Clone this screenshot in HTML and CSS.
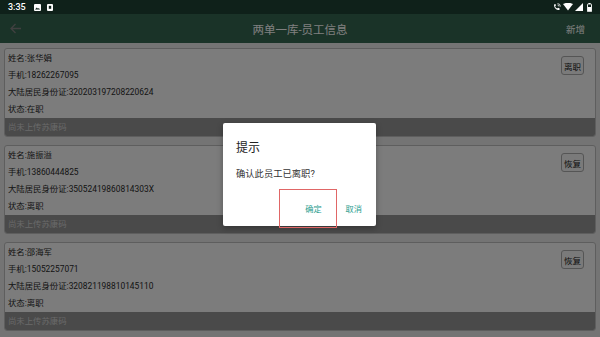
FILE: index.html
```html
<!DOCTYPE html>
<html lang="zh-CN">
<head>
    <meta charset="UTF-8">
    <meta name="viewport" content="width=device-width, initial-scale=1.0">
    <title>两单一库-员工信息</title>
    <link rel="stylesheet" href="styles.css">
</head>
<body>

    <!-- barra de status -->
    <div class="statusbar">
        <div class="status-left">
            <span class="time">3:35</span>
            <svg class="sicon" width="7" height="7" viewBox="0 0 7 7"><rect x="0" y="0" width="7" height="7" rx="1" fill="#fff"/><path d="M1 5.5 L2.8 3.5 L4 4.7 L4.8 4 L6 5.5 Z" fill="#0f211a"/></svg>
            <svg class="sicon" width="6" height="7" viewBox="0 0 6 7"><rect x="0" y="0" width="6" height="7" rx="1" fill="#fff"/><rect x="1.8" y="1.8" width="2.4" height="3" fill="#0f211a"/></svg>
        </div>
        <div class="status-right">
            <svg width="8" height="8" viewBox="0 0 8 8"><path d="M1 1.5 C1 5 3 7 6.5 7 L6.5 5.3 L5 4.8 L4.2 5.6 C3.2 5 2.6 4.4 2.1 3.4 L2.9 2.6 L2.5 1 Z" fill="#fff"/><path d="M4.5 0.6 A3 3 0 0 1 7.4 3.5 M4.5 2 A1.5 1.5 0 0 1 6 3.5" stroke="#fff" stroke-width="0.8" fill="none"/></svg>
            <svg width="10" height="8" viewBox="0 0 10 8"><path d="M0 1 Q5 -1.5 10 1 L5 7.5 Z" fill="#fff"/></svg>
            <svg width="8" height="8" viewBox="0 0 8 8"><path d="M0 8 L8 0 L8 8 Z" fill="#fff"/></svg>
            <svg width="5" height="9" viewBox="0 0 5 9"><rect x="1.5" y="0" width="2" height="1" fill="#fff"/><rect x="0.5" y="1" width="4" height="8" rx="0.6" fill="none" stroke="#fff" stroke-width="0.9"/><rect x="1" y="4" width="3" height="4.6" fill="#fff"/></svg>
        </div>
    </div>

    <!-- barra do titulo -->
    <div class="toolbar">
        <svg class="back" width="12" height="11" viewBox="0 0 12 11"><path d="M11 5.5 H1.5 M5.5 1 L1 5.5 L5.5 10" stroke="#808080" stroke-width="1.3" fill="none"/></svg>
        <div class="title">两单一库-员工信息</div>
        <div class="action">新增</div>
    </div>

    <div class="lista">
        <div class="card">
            <div class="card-top">
                <div class="info">
                    <p>姓名:张华娟</p>
                    <p>手机:18262267095</p>
                    <p>大陆居民身份证:320203197208220624</p>
                    <p>状态:在职</p>
                </div>
                <button class="btn">离职</button>
            </div>
            <div class="bar">尚未上传苏康码</div>
        </div>

        <div class="card">
            <div class="card-top">
                <div class="info">
                    <p>姓名:施振溢</p>
                    <p>手机:13860444825</p>
                    <p>大陆居民身份证:35052419860814303X</p>
                    <p>状态:离职</p>
                </div>
                <button class="btn">恢复</button>
            </div>
            <div class="bar">尚未上传苏康码</div>
        </div>

        <div class="card">
            <div class="card-top">
                <div class="info">
                    <p>姓名:邵海军</p>
                    <p>手机:15052257071</p>
                    <p>大陆居民身份证:320821198810145110</p>
                    <p>状态:离职</p>
                </div>
                <button class="btn">恢复</button>
            </div>
            <div class="bar">尚未上传苏康码</div>
        </div>
    </div>

    <!-- dialogo de confirmacao -->
    <div class="dim"></div>
    <div class="dialog">
        <div class="dlg-title">提示</div>
        <div class="dlg-msg">确认此员工已离职?</div>
        <div class="dlg-btns">
            <span class="dlg-btn">确定</span>
            <span class="dlg-btn">取消</span>
        </div>
        <div class="marca"></div>
    </div>

</body>
</html>
```

FILE: styles.css
```css
body {
    margin: 0;
    width: 600px;
    height: 337px;
    overflow: hidden;
    background-color: #e8e8e8;
    font-family: Roboto, "Noto Sans CJK SC", sans-serif;
}

/* barra de status */
.statusbar {
    height: 14px;
    background-color: #0f211a;
    display: flex;
    align-items: center;
    justify-content: space-between;
    padding: 0 8px;
    position: relative;
    z-index: 3;
}
.status-left, .status-right {
    display: flex;
    align-items: center;
}
.time {
    color: #fff;
    font-size: 9px;
    font-weight: 500;
    margin-right: 8px;
}
.sicon {
    margin-right: 6px;
}
.status-right svg {
    margin-left: 2px;
}
.status-right svg:last-child {
    margin-left: 4px;
}

/* toolbar */
.toolbar {
    height: 29px;
    background-color: #346650;
    display: flex;
    align-items: center;
    position: relative;
}
.back {
    margin-left: 10px;
}
.title {
    position: absolute;
    left: 0;
    right: 0;
    text-align: center;
    font-size: 11.5px;
    color: #fff;
}
.action {
    margin-left: auto;
    margin-right: 15px;
    font-size: 9.5px;
    color: #fff;
    position: relative;
}

/* cards */
.lista {
    padding: 5px 4px 0;
}
.card {
    background-color: #f8f8f8;
    border: 1px solid #bdbdbd;
    border-radius: 3px;
    margin-bottom: 8px;
    overflow: hidden;
}
.card-top {
    display: flex;
    align-items: flex-start;
}
.info {
    flex: 1;
    padding: 1px 3px 0;
}
.info p {
    margin: 0;
    height: 17px;
    line-height: 17px;
    font-size: 8.4px;
    color: #2a2a2a;
}
.btn {
    margin: 7px 11px 0 0;
    width: 23px;
    height: 19px;
    padding: 0;
    font-family: inherit;
    font-size: 8.5px;
    color: #222;
    background-color: #f4f4f4;
    border: 1px solid #aaa;
    border-radius: 3px;
}
.bar {
    height: 18px;
    line-height: 18px;
    background-color: #949494;
    color: #d2d2d2;
    font-size: 8.4px;
    padding: 0 3px;
}

/* dialogo */
.dim {
    position: absolute;
    left: 0;
    top: 14px;
    width: 600px;
    height: 323px;
    background-color: rgba(0, 0, 0, 0.5);
}
.dialog {
    position: absolute;
    left: 223px;
    top: 123px;
    width: 153px;
    height: 103px;
    background-color: #fff;
    border-radius: 2px;
    box-shadow: 0 2px 6px rgba(0, 0, 0, 0.3);
}
.dlg-title {
    font-size: 12px;
    color: #222;
    margin: 15px 0 0 13px;
}
.dlg-msg {
    font-size: 9.3px;
    color: #333;
    margin: 11px 0 0 13px;
}
.dlg-btns {
    display: flex;
    justify-content: flex-end;
    gap: 24px;
    margin: 22px 14px 0 0;
}
.dlg-btn {
    font-size: 8.2px;
    color: #2a9d8f;
}
.marca {
    position: absolute;
    left: 56px;
    top: 66px;
    width: 56px;
    height: 37px;
    border: 1px solid #e06666;
}
```
